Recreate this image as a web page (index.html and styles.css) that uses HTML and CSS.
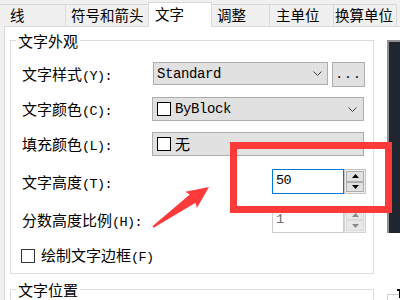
FILE: index.html
```html
<!DOCTYPE html>
<html lang="zh">
<head>
<meta charset="utf-8">
<title>文字</title>
<link rel="stylesheet" href="styles.css">
</head>
<body>
<div class="tabs">
  <div class="tab">线</div>
  <div class="tab">符号和箭头</div>
  <div class="tab active">文字</div>
  <div class="tab">调整</div>
  <div class="tab">主单位</div>
  <div class="tab">换算单位</div>
</div>
<div class="page">
  <div class="col-main">
    <fieldset class="group g1">
      <legend>文字外观</legend>
      <div class="group-body">
        <div class="row r1">
          <span class="label">文字样式<span class="m">(Y):</span></span>
          <div class="combo combo-style"><span class="txt">Standard</span><svg class="chev" width="9" height="5" viewBox="0 0 9 5"><polyline points="0.5,0.5 4.5,4.5 8.5,0.5" fill="none" stroke="#444" stroke-width="1"/></svg></div>
          <div class="btn-more">...</div>
        </div>
        <div class="row r2">
          <span class="label">文字颜色<span class="m">(C):</span></span>
          <div class="combo combo-wide"><span class="swatch"></span><span class="txt">ByBlock</span><svg class="chev" width="9" height="5" viewBox="0 0 9 5"><polyline points="0.5,0.5 4.5,4.5 8.5,0.5" fill="none" stroke="#444" stroke-width="1"/></svg></div>
        </div>
        <div class="row r3">
          <span class="label">填充颜色<span class="m">(L):</span></span>
          <div class="combo combo-wide"><span class="swatch"></span><span class="cjk">无</span></div>
        </div>
        <div class="row r4">
          <span class="label">文字高度<span class="m">(T):</span></span>
          <div class="spin">
            <div class="field">50</div>
            <div class="sbtns">
              <div class="sb"><svg width="7" height="4" viewBox="0 0 7 4"><polygon points="0,4 7,4 3.5,0"/></svg></div>
              <div class="sb"><svg width="7" height="4" viewBox="0 0 7 4"><polygon points="0,0 7,0 3.5,4"/></svg></div>
            </div>
          </div>
        </div>
        <div class="row r5">
          <span class="label">分数高度比例<span class="m">(H):</span></span>
          <div class="spin dis">
            <div class="field">1</div>
            <div class="sbtns">
              <div class="sb"><svg width="7" height="4" viewBox="0 0 7 4"><polygon points="0,4 7,4 3.5,0"/></svg></div>
              <div class="sb"><svg width="7" height="4" viewBox="0 0 7 4"><polygon points="0,0 7,0 3.5,4"/></svg></div>
            </div>
          </div>
        </div>
        <div class="row r6">
          <span class="check"></span>
          <span class="check-label">绘制文字边框<span class="m">(F)</span></span>
        </div>
      </div>
    </fieldset>
    <fieldset class="group g2">
      <legend>文字位置</legend>
    </fieldset>
  </div>
  <div class="col-side">
    <div class="preview"></div>
    <div class="preview2"><span class="mark"></span></div>
  </div>
</div>
<svg class="annot" width="400" height="300" viewBox="0 0 400 300">
  <rect x="233.5" y="145.5" width="155" height="64" fill="none" stroke="#fd3a3a" stroke-width="7"/>
  <polygon points="209,187 185.3,191.7 189.8,194.6 152.4,226.2 153.6,227.8 195.6,202.8 196.9,208" fill="#fd3a3a"/>
</svg>
</body>
</html>
```
FILE: styles.css
```css
* { box-sizing: border-box; }
html, body { margin: 0; padding: 0; }
body {
  width: 400px;
  height: 300px;
  overflow: hidden;
  position: relative;
  background: #f0f0f0;
  color: #000;
  font-family: "Noto Sans CJK SC", sans-serif;
}

/* tabs */
.tabs { display: flex; align-items: flex-end; height: 26px; }
.tab {
  flex: none;
  height: 22px;
  border-top: 1px solid #d9d9d9;
  border-left: 1px solid #d9d9d9;
  background: #f0f0f0;
  font-size: 14.5px;
  line-height: 20px;
  white-space: nowrap;
}
.tab:nth-child(1) { width: 65px; border-left: none; padding-left: 10px; }
.tab:nth-child(2) { width: 83px; padding-left: 5px; }
.tab:nth-child(4) { width: 57px; border-left: none; padding-left: 5px; }
.tab:nth-child(5) { width: 64px; padding-left: 6px; }
.tab:nth-child(6) { width: 64px; padding-left: 1px; border-right: 1px solid #d9d9d9; }
.tab.active {
  width: 64px;
  height: 25px;
  margin-bottom: -1px;
  padding-left: 6px;
  border-right: 1px solid #d9d9d9;
  background: #fff;
  line-height: 21px;
  position: relative;
  z-index: 1;
}

/* page */
.page {
  display: flex;
  margin-left: 4px;
  height: 274px;
  padding-left: 5px;
  border-left: 1px solid #d9d9d9;
  border-top: 1px solid #d9d9d9;
  background: #fff;
  overflow: hidden;
}
.col-main { width: 364px; flex: none; }
.col-side { flex: 1; margin-left: 13px; }

.group {
  margin: 0;
  padding: 0;
  min-width: 0;
  border: 1px solid #dcdcdc;
}
.group legend {
  margin-left: 5px;
  padding: 0 2px;
  font-size: 15px;
  line-height: 19px;
}
.g1 { margin-top: 4px; }
.g2 { margin-top: 6px; height: 20px; border-bottom: none; }

.group-body { padding: 12px 0 10px 11px; }

.row { display: flex; align-items: flex-start; }
.label {
  flex: none;
  width: 130px;
  font-size: 15px;
  white-space: nowrap;
}
.m { font-family: "Liberation Mono", monospace; font-size: 13.5px; letter-spacing: -0.6px; }

.r1 { height: 25px; }
.r1 .label { line-height: 23px; }
.r2 { height: 24px; margin-top: 10px; }
.r2 .label { line-height: 24px; }
.r3 { height: 24px; margin-top: 11px; }
.r3 .label { line-height: 24px; }
.r4 { height: 25px; margin-top: 13px; }
.r4 .label { line-height: 25px; }
.r5 { height: 26px; margin-top: 13px; }
.r5 .label { line-height: 26px; }
.r6 { height: 14px; margin-top: 16px; align-items: center; }

/* combos */
.combo {
  display: flex;
  align-items: center;
  height: 24px;
  padding-left: 4px;
  background: #e1e1e1;
  border: 1px solid #adadad;
}
.combo-style { width: 175px; height: 23px; margin-left: 1px; padding-left: 3px; }
.combo-wide { width: 212px; }
.txt { font-family: "Liberation Mono", monospace; font-size: 14px; letter-spacing: -0.4px; }
.cjk { font-size: 15px; line-height: 20px; }
.swatch {
  flex: none;
  width: 14px;
  height: 14px;
  margin-right: 4px;
  border: 1px solid #000;
  background: #fff;
}
.chev { margin-left: auto; margin-right: 5px; flex: none; }
.combo-wide .chev { margin-right: 6px; }

.btn-more {
  width: 33px;
  height: 25px;
  margin-left: 4px;
  border: 1px solid #adadad;
  background: #e1e1e1;
  text-align: center;
  font-family: "Liberation Mono", monospace;
  font-size: 13px;
  line-height: 23px;
  letter-spacing: 1px;
}

/* spin boxes */
.spin { display: flex; margin-left: 120px; height: 100%; }
.field {
  width: 72px;
  height: 100%;
  padding-left: 3px;
  border: 1px solid #0078d7;
  background: #fff;
  font-family: "Liberation Mono", monospace;
  font-size: 13.5px;
  letter-spacing: -0.6px;
  line-height: 22px;
}
.sbtns {
  display: flex;
  flex-direction: column;
  width: 22px;
  height: 100%;
  padding: 1px;
  border: 1px solid #c4c4c4;
  background: #f0f0f0;
}
.sb {
  flex: 1;
  display: flex;
  align-items: center;
  justify-content: center;
  border: 1px solid #adadad;
  background: #e1e1e1;
}
.sb svg { fill: #000; }
.dis .field { border-color: #cccccc; color: #6d6d6d; line-height: 24px; }
.dis .sbtns { border-color: #d4d4d4; }
.dis .sb { border-color: #dadada; background: #e8e8e8; }
.dis .sb svg { fill: #8a8a8a; }

/* checkbox */
.check {
  flex: none;
  width: 14px;
  height: 14px;
  margin-left: -1px;
  border: 1px solid #333;
  background: #fff;
}
.check-label { margin-left: 6px; font-size: 15px; line-height: 14px; white-space: nowrap; }

/* preview */
.preview {
  height: 193px;
  margin-top: 13px;
  border-left: 2px solid #8f8f8f;
  border-top: 2px solid #8f8f8f;
  background: #1f2630;
}
.preview2 {
  position: relative;
  height: 6px;
  margin-top: 61px;
  border-left: 1px solid #cfcfcf;
  border-top: 1px solid #cfcfcf;
}
.mark {
  position: absolute;
  left: 9px;
  top: -6px;
  width: 4px;
  height: 9px;
  border-top: 2px solid #000;
  border-right: 2px solid #000;
}

.annot { position: absolute; left: 0; top: 0; pointer-events: none; }
```
